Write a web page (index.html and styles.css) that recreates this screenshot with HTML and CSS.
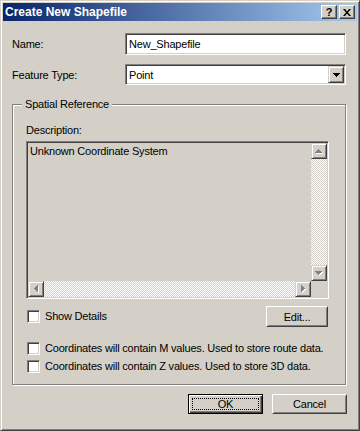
FILE: index.html
```html
<!DOCTYPE html>
<html>
<head>
<meta charset="utf-8">
<link rel="stylesheet" href="styles.css">
</head>
<body>
<div class="window">
  <div class="titlebar">
    <span class="title">Create New Shapefile</span>
    <div class="tbtns">
      <div class="tbtn help">?</div>
      <div class="tbtn close"><svg width="8" height="7" viewBox="0 0 8 7"><polygon points="0,0 2,0 4,2.5 6,0 8,0 5,3.5 8,7 6,7 4,4.5 2,7 0,7 3,3.5" fill="#000"/></svg></div>
    </div>
  </div>
  <div class="body">
    <div class="row r-name">
      <span class="lbl">Name:</span>
      <div class="field">New_Shapefile</div>
    </div>
    <div class="row r-type">
      <span class="lbl">Feature Type:</span>
      <div class="field combo">
        <span class="ctext">Point</span>
        <div class="dropbtn"><svg width="7" height="4" viewBox="0 0 7 4" shape-rendering="crispEdges"><path d="M0 0h7v1H6v1H5v1H4v1H3V3H2V2H1V1H0z" fill="#000"/></svg></div>
      </div>
    </div>
    <div class="group">
      <div class="legend">Spatial Reference</div>
      <div class="desc-lbl">Description:</div>
      <div class="listbox">
        <div class="lb-content">Unknown Coordinate System</div>
        <div class="vscroll">
          <div class="sbtn"><svg width="8" height="5" viewBox="0 0 8 5" shape-rendering="crispEdges"><path d="M4 1h1v1h1v1h1v1h1v1H1V4h1V3h1V2h1z" fill="#fff"/><path d="M3 0h1v1h1v1h1v1h1v1H0V3h1V2h1V1h1z" fill="#808080"/></svg></div>
          <div class="track"></div>
          <div class="sbtn"><svg width="8" height="5" viewBox="0 0 8 5" shape-rendering="crispEdges"><path d="M1 1h7v1H7v1H6v1H5v1H4V4H3V3H2V2H1z" fill="#fff"/><path d="M0 0h7v1H6v1H5v1H4v1H3V3H2V2H1V1H0z" fill="#808080"/></svg></div>
        </div>
        <div class="hscroll">
          <div class="sbtn"><svg width="5" height="8" viewBox="0 0 5 8" shape-rendering="crispEdges"><path d="M4 1h1v7H4V7H3V6H2V5H1V4h1V3h1V2h1z" fill="#fff"/><path d="M3 0h1v7H3V6H2V5H1V4H0V3h1V2h1V1h1z" fill="#808080"/></svg></div>
          <div class="track"></div>
          <div class="sbtn"><svg width="5" height="8" viewBox="0 0 5 8" shape-rendering="crispEdges"><path d="M1 1h1v1h1v1h1v1h1v1H4v1H3v1H2v1H1z" fill="#fff"/><path d="M0 0h1v1h1v1h1v1h1v1H3v1H2v1H1v1H0z" fill="#808080"/></svg></div>
        </div>
        <div class="corner"></div>
      </div>
      <div class="row r-details">
        <div class="chk-item"><span class="chk"></span><span>Show Details</span></div>
        <div class="btn edit">Edit...</div>
      </div>
      <div class="chk-item r-m"><span class="chk"></span><span>Coordinates will contain M values. Used to store route data.</span></div>
      <div class="chk-item r-z"><span class="chk"></span><span>Coordinates will contain Z values. Used to store 3D data.</span></div>
    </div>
    <div class="buttons">
      <div class="btn ok"><span class="focus">OK</span></div>
      <div class="btn cancel">Cancel</div>
    </div>
  </div>
</div>
</body>
</html>
```
FILE: styles.css
```css
html, body {
  margin: 0;
  padding: 0;
}
body {
  font-family: "Liberation Sans", Arial, sans-serif;
  font-size: 11px;
  letter-spacing: -0.2px;
  color: #000;
  background: #d4d0c8;
}
.window {
  width: 360px;
  height: 431px;
  box-sizing: border-box;
  background: #d4d0c8;
  border: 1px solid;
  border-color: #d4d0c8 #404040 #404040 #d4d0c8;
  box-shadow: inset 1px 1px #fff, inset -1px -1px #808080;
  padding: 2px;
  display: flex;
  flex-direction: column;
}
.titlebar {
  height: 18px;
  flex: none;
  display: flex;
  align-items: center;
  justify-content: space-between;
  background: linear-gradient(to right, #0a246a, #a6caf0);
  color: #fff;
}
.title {
  font-weight: bold;
  font-size: 12px;
  letter-spacing: 0;
  padding-left: 2px;
  line-height: 18px;
}
.tbtns {
  display: flex;
  gap: 2px;
  margin-right: 2px;
}
.tbtn {
  width: 16px;
  height: 14px;
  box-sizing: border-box;
  background: #d4d0c8;
  border: 1px solid;
  border-color: #fff #404040 #404040 #fff;
  box-shadow: inset -1px -1px #808080;
  display: flex;
  align-items: center;
  justify-content: center;
  color: #000;
  font-weight: bold;
  font-size: 11px;
  letter-spacing: 0;
  line-height: 12px;
}
.tbtn svg {
  display: block;
}
.body {
  padding: 12px 0 0 9px;
  display: flex;
  flex-direction: column;
}
.row {
  display: flex;
  align-items: center;
}
.lbl {
  width: 113px;
}
.field {
  width: 221px;
  height: 22px;
  box-sizing: border-box;
  border: 1px solid;
  border-color: #808080 #fff #fff #808080;
  box-shadow: inset 1px 1px #404040, inset -1px -1px #d4d0c8;
  background: #fff;
  padding-left: 3px;
  display: flex;
  align-items: center;
}
.r-type {
  margin-top: 9px;
}
.combo {
  height: 21px;
  padding: 1px 1px 1px 3px;
}
.dropbtn {
  margin-left: auto;
  width: 16px;
  height: 17px;
  box-sizing: border-box;
  background: #d4d0c8;
  border: 1px solid;
  border-color: #d4d0c8 #404040 #404040 #d4d0c8;
  box-shadow: inset 1px 1px #fff, inset -1px -1px #808080;
  display: flex;
  align-items: center;
  justify-content: center;
}
.dropbtn svg, .sbtn svg {
  display: block;
}
.group {
  position: relative;
  margin: 19px 0 0 0;
  width: 334px;
  box-sizing: border-box;
  border: 1px solid #808080;
  box-shadow: inset 1px 1px #fff, 1px 1px #fff;
  padding: 19px 0 11px 13px;
}
.legend {
  position: absolute;
  top: -7px;
  left: 9px;
  padding: 0 3px;
  line-height: 13px;
  background: #d4d0c8;
}
.desc-lbl {
  line-height: 13px;
}
.listbox {
  margin-top: 4px;
  width: 303px;
  height: 158px;
  box-sizing: border-box;
  border: 1px solid;
  border-color: #808080 #fff #fff #808080;
  box-shadow: inset 1px 1px #404040, inset -1px -1px #d4d0c8;
  background: #d4d0c8;
  padding: 1px;
  display: grid;
  grid-template-columns: 1fr 16px;
  grid-template-rows: 1fr 16px;
}
.lb-content {
  padding: 2px 0 0 2px;
  line-height: 13px;
}
.vscroll {
  display: flex;
  flex-direction: column;
}
.hscroll {
  display: flex;
}
.track {
  flex: 1;
  background-color: #d4d0c8;
  background-image: repeating-conic-gradient(#fff 0% 25%, #d4d0c8 0% 50%);
  background-size: 2px 2px;
}
.sbtn {
  width: 16px;
  height: 16px;
  flex: none;
  box-sizing: border-box;
  background: #d4d0c8;
  border: 1px solid;
  border-color: #d4d0c8 #404040 #404040 #d4d0c8;
  box-shadow: inset 1px 1px #fff, inset -1px -1px #808080;
  display: flex;
  align-items: center;
  justify-content: center;
}
.r-details {
  margin-top: 7px;
  width: 302px;
  justify-content: space-between;
}
.chk-item {
  display: flex;
  align-items: center;
  line-height: 13px;
}
.chk {
  width: 13px;
  height: 13px;
  flex: none;
  box-sizing: border-box;
  border: 1px solid;
  border-color: #808080 #fff #fff #808080;
  box-shadow: inset 1px 1px #404040, inset -1px -1px #d4d0c8;
  background: #fff;
  margin: 0 5px 0 1px;
}
.r-m {
  margin-top: 15px;
}
.r-z {
  margin-top: 5px;
}
.btn {
  height: 21px;
  box-sizing: border-box;
  background: #d4d0c8;
  border: 1px solid;
  border-color: #fff #404040 #404040 #fff;
  box-shadow: inset 1px 1px #d4d0c8, inset -1px -1px #808080;
  display: flex;
  align-items: center;
  justify-content: center;
}
.edit {
  width: 62px;
}
.buttons {
  margin-top: 9px;
  padding-right: 10px;
  display: flex;
  justify-content: flex-end;
  gap: 9px;
}
.buttons .btn {
  width: 75px;
  height: 20px;
}
.ok {
  border: 1px solid #000;
  box-shadow: inset 1px 1px #fff, inset -1px -1px #404040, inset -2px -2px #808080;
  padding: 3px;
}
.focus {
  align-self: stretch;
  flex: 1;
  border: 1px dotted #000;
  display: flex;
  align-items: center;
  justify-content: center;
}
```
